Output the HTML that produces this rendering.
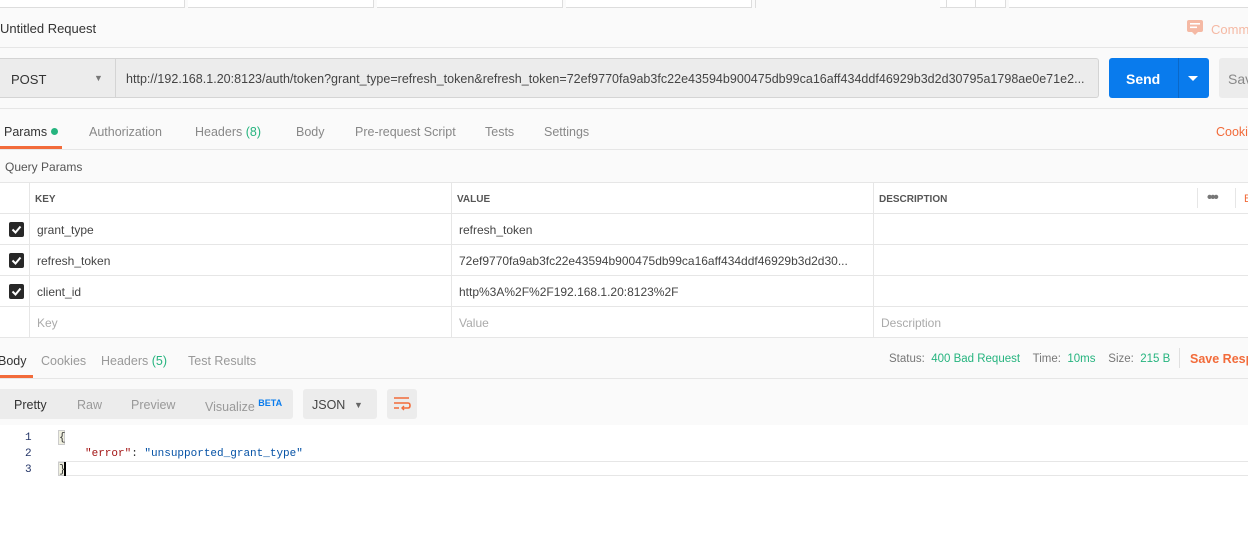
<!DOCTYPE html>
<html><head><meta charset="utf-8"><style>
*{box-sizing:border-box;margin:0;padding:0}
body{width:1248px;height:548px;overflow:hidden;background:#fafafa;font-family:"Liberation Sans",sans-serif;font-size:12px;color:#505050;position:relative}
.a{position:absolute}
.tab{position:absolute;top:0;height:8px;background:#fff;border-right:1px solid #ddd;border-bottom:1px solid #ddd}
.t{position:absolute;white-space:nowrap;transform:translateY(1px)}
.hl{position:absolute;left:0;width:1248px;height:1px;background:#e6e6e6}
.cb{position:absolute;left:9px;width:15px;height:15px;background:#282828;border-radius:2px}
.cb svg{position:absolute;left:2px;top:2px}
</style></head><body>
<div class="tab" style="left:0;width:185px"></div>
<div class="tab" style="left:188px;width:186px"></div>
<div class="tab" style="left:377px;width:186px"></div>
<div class="tab" style="left:566px;width:186px"></div>
<div class="tab" style="left:755px;width:1px;border-bottom:none"></div>
<div class="tab" style="left:940px;width:7px"></div>
<div class="tab" style="left:947px;width:29px"></div>
<div class="tab" style="left:976px;width:30px"></div>
<div class="tab" style="left:1009px;width:239px;border-right:none"></div>

<div class="t" style="left:0;top:20px;font-size:13px;color:#333">Untitled Request</div>
<svg class="a" style="left:1187px;top:20px" width="16" height="16"><rect x="0" y="0" width="16" height="12" rx="2" fill="#f5b9a4"/><path d="M5 12 L8 15 L11 12Z" fill="#f5b9a4"/><rect x="3" y="3" width="10" height="1.6" fill="#fff"/><rect x="3" y="6.5" width="7" height="1.6" fill="#fff"/></svg>
<div class="t" style="left:1211px;top:21px;font-size:13px;color:#f5b9a4">Comm</div>
<div class="hl" style="top:47px"></div>

<div class="a" style="left:0;top:58px;width:1099px;height:40px;background:#ececec;border:1px solid #d4d4d4;border-left:none;border-radius:0 3px 3px 0"></div>
<div class="a" style="left:115px;top:59px;width:1px;height:38px;background:#d4d4d4"></div>
<div class="t" style="left:11px;top:71px;font-size:13px;color:#333">POST</div>
<div class="t" style="left:94px;top:72px;font-size:9px;color:#777">▼</div>
<div class="t" style="left:126px;top:71px;font-size:12.5px;color:#444;letter-spacing:0.02px">http://192.168.1.20:8123/auth/token?grant_type=refresh_token&amp;refresh_token=72ef9770fa9ab3fc22e43594b900475db99ca16aff434ddf46929b3d2d30795a1798ae0e71e2...</div>
<div class="a" style="left:1109px;top:58px;width:100px;height:40px;background:#097bed;border-radius:3px"></div>
<div class="a" style="left:1178px;top:58px;width:1px;height:40px;background:#0a68c8"></div>
<div class="t" style="left:1126px;top:70px;font-size:14px;font-weight:bold;color:#fff">Send</div>
<svg class="a" style="left:1188px;top:76px" width="10" height="6"><path d="M0 0H10L5 5Z" fill="#fff"/></svg>
<div class="a" style="left:1219px;top:58px;width:40px;height:40px;background:#ececec;border-radius:3px"></div>
<div class="t" style="left:1228px;top:70px;font-size:14px;color:#888">Sav</div>
<div class="hl" style="top:108px"></div>

<div class="t" style="left:4px;top:124px;font-size:12.5px;color:#333">Params <span style="display:inline-block;width:7px;height:7px;border-radius:50%;background:#26b47f;vertical-align:1px"></span></div>
<div class="t" style="left:89px;top:124px;font-size:12.5px;color:#888">Authorization</div>
<div class="t" style="left:195px;top:124px;font-size:12.5px;color:#888">Headers <span style="color:#26b47f">(8)</span></div>
<div class="t" style="left:296px;top:124px;font-size:12.5px;color:#888">Body</div>
<div class="t" style="left:355px;top:124px;font-size:12.5px;color:#888">Pre-request Script</div>
<div class="t" style="left:485px;top:124px;font-size:12.5px;color:#888">Tests</div>
<div class="t" style="left:544px;top:124px;font-size:12.5px;color:#888">Settings</div>
<div class="t" style="left:1216px;top:124px;font-size:12.5px;color:#f26b3a">Cooki</div>
<div class="a" style="left:0;top:146px;width:62px;height:3px;background:#f26b3a"></div>
<div class="hl" style="top:149px"></div>

<div class="t" style="left:5px;top:159px;font-size:12px;color:#555">Query Params</div>

<div class="a" style="left:0;top:182px;width:1248px;height:156px;background:#fff;border-top:1px solid #e6e6e6;border-bottom:1px solid #e6e6e6"></div>
<div class="hl" style="top:213px"></div><div class="hl" style="top:244px"></div><div class="hl" style="top:275px"></div><div class="hl" style="top:306px"></div>
<div class="a" style="left:29px;top:183px;width:1px;height:154px;background:#e6e6e6"></div>
<div class="a" style="left:451px;top:183px;width:1px;height:154px;background:#e6e6e6"></div>
<div class="a" style="left:873px;top:183px;width:1px;height:154px;background:#e6e6e6"></div>
<div class="a" style="left:1197px;top:188px;width:1px;height:20px;background:#e6e6e6"></div>
<div class="a" style="left:1235px;top:188px;width:1px;height:20px;background:#e6e6e6"></div>
<div class="t" style="left:35px;top:193px;font-size:10px;font-weight:bold;color:#555">KEY</div>
<div class="t" style="left:457px;top:193px;font-size:10px;font-weight:bold;color:#555">VALUE</div>
<div class="t" style="left:879px;top:193px;font-size:10px;font-weight:bold;color:#555">DESCRIPTION</div>
<div class="t" style="left:1207px;top:188px;font-size:15px;font-weight:bold;color:#777;letter-spacing:-2px">•••</div>
<div class="t" style="left:1244px;top:192px;font-size:11px;color:#f26b3a">B</div>

<div class="cb" style="top:222px"><svg width="11" height="11"><path d="M1.5 5.5L4.5 8.5L9.5 2.5" stroke="#fff" stroke-width="2" fill="none"/></svg></div>
<div class="cb" style="top:253px"><svg width="11" height="11"><path d="M1.5 5.5L4.5 8.5L9.5 2.5" stroke="#fff" stroke-width="2" fill="none"/></svg></div>
<div class="cb" style="top:284px"><svg width="11" height="11"><path d="M1.5 5.5L4.5 8.5L9.5 2.5" stroke="#fff" stroke-width="2" fill="none"/></svg></div>
<div class="t" style="left:37px;top:222px;color:#444">grant_type</div>
<div class="t" style="left:459px;top:222px;color:#444">refresh_token</div>
<div class="t" style="left:37px;top:253px;color:#444">refresh_token</div>
<div class="t" style="left:459px;top:253px;color:#444">72ef9770fa9ab3fc22e43594b900475db99ca16aff434ddf46929b3d2d30...</div>
<div class="t" style="left:37px;top:284px;color:#444">client_id</div>
<div class="t" style="left:459px;top:284px;color:#444">http%3A%2F%2F192.168.1.20:8123%2F</div>
<div class="t" style="left:37px;top:315px;color:#aaa">Key</div>
<div class="t" style="left:459px;top:315px;color:#aaa">Value</div>
<div class="t" style="left:881px;top:315px;color:#aaa">Description</div>

<div class="t" style="left:-2px;top:353px;font-size:12.5px;color:#333">Body</div>
<div class="t" style="left:41px;top:353px;font-size:12.5px;color:#999">Cookies</div>
<div class="t" style="left:101px;top:353px;font-size:12.5px;color:#999">Headers <span style="color:#26b47f">(5)</span></div>
<div class="t" style="left:188px;top:353px;font-size:12.5px;color:#999">Test Results</div>
<div class="a" style="left:0;top:375px;width:33px;height:3px;background:#f26b3a"></div>
<div class="hl" style="top:378px"></div>
<div class="t" style="left:889px;top:352px;font-size:11.5px;color:#777">Status: <span style="color:#26b47f">&nbsp;400 Bad Request</span>&nbsp;&nbsp;&nbsp; Time: <span style="color:#26b47f">&nbsp;10ms</span>&nbsp;&nbsp;&nbsp; Size: <span style="color:#26b47f">&nbsp;215 B</span></div>
<div class="a" style="left:1179px;top:348px;width:1px;height:20px;background:#e0e0e0"></div>
<div class="t" style="left:1190px;top:351px;font-size:12.5px;font-weight:bold;color:#f26b3a">Save Resp</div>

<div class="a" style="left:0;top:389px;width:293px;height:30px;background:#ececec;border-radius:0 3px 3px 0"></div>
<div class="t" style="left:14px;top:397px;font-size:12.5px;color:#333">Pretty</div>
<div class="t" style="left:77px;top:397px;font-size:12.5px;color:#999">Raw</div>
<div class="t" style="left:131px;top:397px;font-size:12.5px;color:#999">Preview</div>
<div class="t" style="left:205px;top:397px;font-size:12.5px;color:#999">Visualize <sup style="font-size:9px;font-weight:bold;color:#097bed">BETA</sup></div>
<div class="a" style="left:303px;top:389px;width:74px;height:30px;background:#ececec;border-radius:3px"></div>
<div class="t" style="left:312px;top:397px;font-size:12.5px;color:#444">JSON</div>
<div class="t" style="left:354px;top:399px;font-size:9px;color:#666">▼</div>
<div class="a" style="left:387px;top:389px;width:30px;height:30px;background:#ececec;border-radius:3px"></div>
<svg class="a" style="left:393px;top:396px" width="18" height="16"><path d="M1 2H16M1 7H15Q17 7 17 9.5Q17 12 15 12H10M1 12H6" stroke="#f26b3a" stroke-width="1.6" fill="none"/><path d="M11 10L9 12L11 14" stroke="#f26b3a" stroke-width="1.4" fill="none"/></svg>

<div class="a" style="left:0;top:425px;width:1248px;height:123px;background:#fff"></div>
<div class="a" style="left:58px;top:461px;width:1190px;height:15px;border-top:1px solid #e6e6e6;border-bottom:1px solid #e6e6e6"></div>
<div class="a" style="left:58px;top:430px;width:7px;height:15px;border:1px solid #ccc;background:#f0f0e0"></div>
<div class="a" style="left:58px;top:462px;width:7px;height:14px;border:1px solid #ccc;background:#f0f0e0"></div>
<div class="a" style="left:64px;top:462px;width:2px;height:14px;background:#000"></div>
<div class="t" style="left:25px;top:431px;font-family:'Liberation Mono',monospace;font-size:11px;color:#236">1</div>
<div class="t" style="left:25px;top:447px;font-family:'Liberation Mono',monospace;font-size:11px;color:#236">2</div>
<div class="t" style="left:25px;top:463px;font-family:'Liberation Mono',monospace;font-size:11px;color:#236">3</div>
<div class="t" style="left:59px;top:431px;font-family:'Liberation Mono',monospace;font-size:11px;color:#333">{</div>
<div class="t" style="left:85px;top:447px;font-family:'Liberation Mono',monospace;font-size:11px;color:#333"><span style="color:#a31515">"error"</span>: <span style="color:#0451a5">"unsupported_grant_type"</span></div>
<div class="t" style="left:59px;top:463px;font-family:'Liberation Mono',monospace;font-size:11px;color:#333">}</div>
</body></html>
